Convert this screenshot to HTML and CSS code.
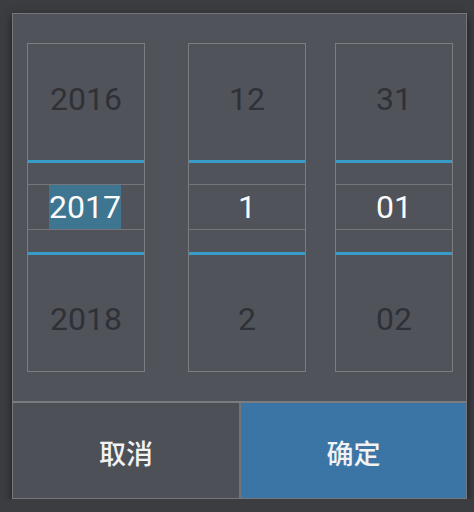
FILE: index.html
```html
<!DOCTYPE html>
<html lang="zh-CN">
<head>
    <meta charset="UTF-8">
    <meta name="viewport" content="width=device-width, initial-scale=1.0">
    <title>日期选择</title>
    <link rel="stylesheet" href="styles.css">
</head>
<body>
    <div class="dialog">
        <div class="pickers">
            <div class="wheel year">
                <div class="item prev">2016</div>
                <div class="divider"></div>
                <div class="field"><span class="selected marked">2017</span></div>
                <div class="divider"></div>
                <div class="item next">2018</div>
            </div>
            <div class="wheel month">
                <div class="item prev">12</div>
                <div class="divider"></div>
                <div class="field"><span class="selected">1</span></div>
                <div class="divider"></div>
                <div class="item next">2</div>
            </div>
            <div class="wheel day">
                <div class="item prev">31</div>
                <div class="divider"></div>
                <div class="field"><span class="selected">01</span></div>
                <div class="divider"></div>
                <div class="item next">02</div>
            </div>
        </div>
        <div class="buttons">
            <button class="btn cancel">取消</button>
            <button class="btn ok">确定</button>
        </div>
    </div>
</body>
</html>
```

FILE: styles.css
```css
body { margin: 0; background: #3b3d40; font-family: Roboto, "Noto Sans CJK SC", sans-serif; }

.dialog { width: 455px; height: 486px; margin: 13px 0 0 12px; box-sizing: border-box; border: 1px solid #75777b; background: #51535b; box-shadow: 0 3px 8px rgba(0,0,0,0.55); display: flex; flex-direction: column; }

.pickers { display: flex; padding: 29px 13px 29px 14px; height: 387px; box-sizing: border-box; flex-shrink: 0; }
.wheel { width: 118px; height: 329px; box-sizing: border-box; border: 1px solid #7b7d83; display: flex; flex-direction: column; }
.wheel.month { margin-left: 43px; }
.wheel.day { margin-left: 29px; }

.item { height: 116px; box-sizing: border-box; display: flex; align-items: center; justify-content: center; font-size: 32px; color: #2f3137; }
.item.prev { padding-bottom: 6px; }
.item.next { padding-top: 12px; }
.divider { height: 3px; background: #399bc8; }
.field { margin: 21px 0 22px; height: 44px; border-top: 1px solid #74767b; border-bottom: 1px solid #74767b; display: flex; align-items: center; justify-content: center; }
.wheel.year .field { justify-content: flex-start; padding-left: 21px; }
.selected { font-size: 32px; line-height: 44px; color: #fafafa; }
.selected.marked { background: #3e7591; }

.buttons { flex: 1; display: flex; border-top: 2px solid #7a7c80; }
.btn { border: none; margin: 0; padding: 0; font-family: "Noto Sans CJK SC", sans-serif; font-size: 27px; font-weight: 500; color: #f2f2f2; display: flex; align-items: center; justify-content: center; padding-top: 4px; }
.btn.cancel { width: 228px; background: #4e5058; border-right: 2px solid #727478; }
.btn.ok { flex: 1; background: #3a75a5; }
```
